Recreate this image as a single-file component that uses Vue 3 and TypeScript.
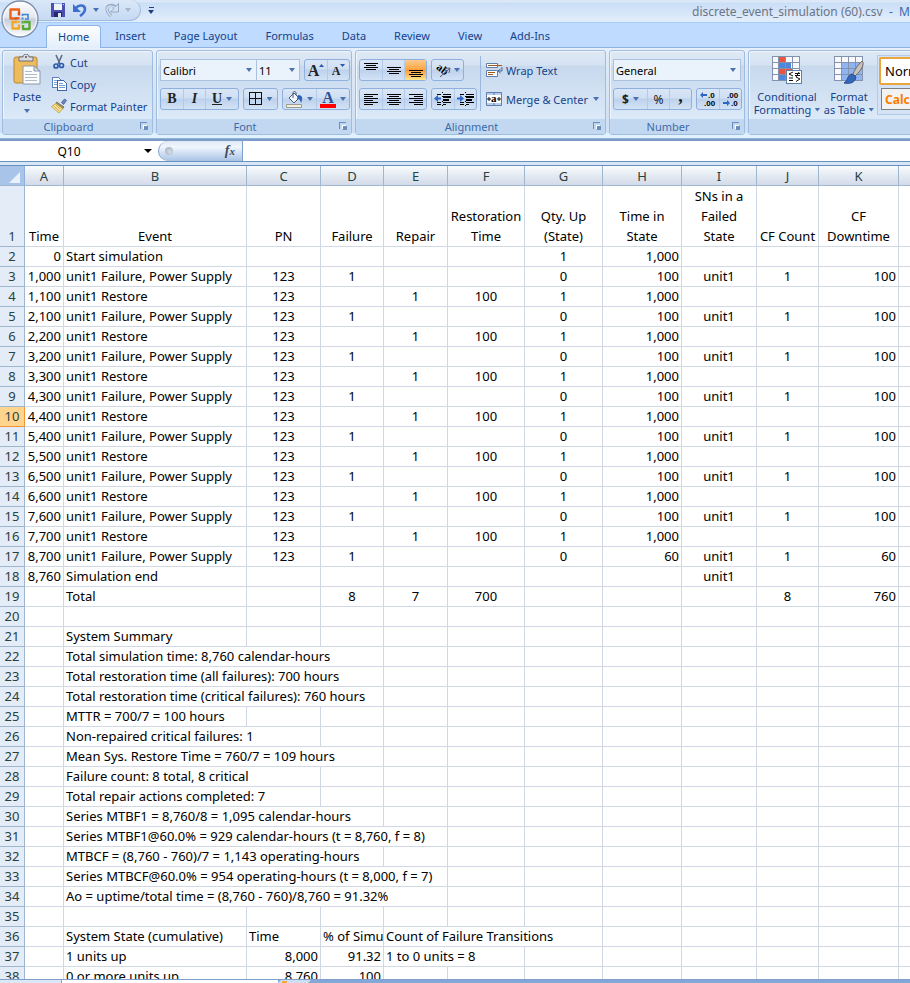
<script setup lang="ts">
import { ref } from 'vue'

type Align = 'l' | 'c' | 'r'
interface Cell {
  text: string
  align: Align
  span: number
}
interface Row {
  n: number
  cells: Cell[]
}

const tabs: string[] = ['Home', 'Insert', 'Page Layout', 'Formulas', 'Data', 'Review', 'View', 'Add-Ins']
const activeTab = ref('Home')
const fontName = ref('Calibri')
const fontSize = ref('11')
const numberFormat = ref('General')
const nameBox = ref('Q10')
const formula = ref('')
const selectedRow = 10

const columns: string[] = ['A', 'B', 'C', 'D', 'E', 'F', 'G', 'H', 'I', 'J', 'K', 'L']
const defaultAlign: Align[] = ['r', 'l', 'c', 'c', 'c', 'c', 'c', 'r', 'c', 'c', 'r', 'l']

const headings: string[] = [
  'Time', 'Event', 'PN', 'Failure', 'Repair', 'Restoration\nTime', 'Qty. Up\n(State)',
  'Time in\nState', 'SNs in a\nFailed\nState', 'CF Count', 'CF\nDowntime', '',
]

function plain(values: string[]): Cell[] {
  return columns.map((_, i) => ({ text: values[i] ?? '', align: defaultAlign[i], span: 1 }))
}

// A long text in column B runs over the empty cells on its right.
function note(text: string, span: number): Cell[] {
  const cells: Cell[] = [
    { text: '', align: 'r', span: 1 },
    { text, align: 'l', span },
  ]
  for (let i = 1 + span; i < columns.length; i++) cells.push({ text: '', align: 'l', span: 1 })
  return cells
}

const eventTimes: string[] = [
  '1,000', '1,100', '2,100', '2,200', '3,200', '3,300', '4,300', '4,400',
  '5,400', '5,500', '6,500', '6,600', '7,600', '7,700', '8,700',
]

const events: Cell[][] = eventTimes.map((time, i) => {
  if (i % 2 === 1) return plain([time, 'unit1 Restore', '123', '', '1', '100', '1', '1,000'])
  const down = i === eventTimes.length - 1 ? '60' : '100'
  return plain([time, 'unit1 Failure, Power Supply', '123', '1', '', '', '0', down, 'unit1', '1', down])
})

const notes: [string, number][] = [
  ['System Summary', 1],
  ['Total simulation time: 8,760 calendar-hours', 3],
  ['Total restoration time (all failures): 700 hours', 3],
  ['Total restoration time (critical failures): 760 hours', 3],
  ['MTTR = 700/7 = 100 hours', 1],
  ['Non-repaired critical failures: 1', 2],
  ['Mean Sys. Restore Time = 760/7 = 109 hours', 3],
  ['Failure count: 8 total, 8 critical', 2],
  ['Total repair actions completed: 7', 2],
  ['Series MTBF1 = 8,760/8 = 1,095 calendar-hours', 3],
  ['Series MTBF1@60.0% = 929 calendar-hours (t = 8,760, f = 8)', 4],
  ['MTBCF = (8,760 - 760)/7 = 1,143 operating-hours', 3],
  ['Series MTBCF@60.0% = 954 operating-hours (t = 8,000, f = 7)', 4],
  ['Ao = uptime/total time = (8,760 - 760)/8,760 = 91.32%', 4],
]

function stateRow(values: [string, Align, number][]): Cell[] {
  const cells: Cell[] = [{ text: '', align: 'r', span: 1 }]
  let used = 1
  for (const [text, align, span] of values) {
    cells.push({ text, align, span })
    used += span
  }
  for (; used < columns.length; used++) cells.push({ text: '', align: 'l', span: 1 })
  return cells
}

const body: Cell[][] = [
  plain(['0', 'Start simulation', '', '', '', '', '1', '1,000']),
  ...events,
  plain(['8,760', 'Simulation end', '', '', '', '', '', '', 'unit1']),
  plain(['', 'Total', '', '8', '7', '700', '', '', '', '8', '760']),
  plain([]),
  ...notes.map(([text, span]) => note(text, span)),
  plain([]),
  stateRow([['System State (cumulative)', 'l', 1], ['Time', 'l', 1], ['% of Simu', 'l', 1], ['Count of Failure Transitions', 'l', 3]]),
  stateRow([['1 units up', 'l', 1], ['8,000', 'r', 1], ['91.32', 'r', 1], ['1 to 0 units = 8', 'l', 2]]),
  stateRow([['0 or more units up', 'l', 1], ['8,760', 'r', 1], ['100', 'r', 1]]),
]
const rows: Row[] = body.map((cells, i) => ({ n: i + 2, cells }))

// Line ends of the six paragraph-alignment pictures: [x1, x2, y].
const alignTop: number[][] = [[2, 16, 1], [4, 14, 3], [2, 16, 5], [4, 14, 7]]
const alignMid: number[][] = [[2, 16, 5], [4, 14, 7], [2, 16, 9], [4, 14, 11]]
const alignBot: number[][] = [[2, 16, 8], [4, 14, 10], [2, 16, 12], [4, 14, 14]]
const alignLeft: number[][] = [[2, 16, 3], [2, 11, 5], [2, 16, 7], [2, 11, 9], [2, 16, 11], [2, 11, 13]]
const alignCenter: number[][] = [[2, 16, 3], [4, 14, 5], [2, 16, 7], [4, 14, 9], [2, 16, 11], [4, 14, 13]]
const alignRight: number[][] = [[2, 16, 3], [7, 16, 5], [2, 16, 7], [7, 16, 9], [2, 16, 11], [7, 16, 13]]
const topRowAligns = [
  { name: 'Top Align', lines: alignTop, on: false },
  { name: 'Middle Align', lines: alignMid, on: false },
  { name: 'Bottom Align', lines: alignBot, on: true },
]
const lowRowAligns = [
  { name: 'Align Left', lines: alignLeft },
  { name: 'Center', lines: alignCenter },
  { name: 'Align Right', lines: alignRight },
]
</script>

<template>
  <div class="app">
    <header class="titlebar">
      <div class="quick">
        <button class="q" aria-label="Save">
          <svg width="14" height="14" viewBox="0 0 14 14" shape-rendering="crispEdges">
            <path d="M0 0h13l1 1v13H0z" fill="#4a4fb0" />
            <path d="M3 0h8v7H3z" fill="#eef3fc" />
            <path d="M3 0h8v1H3z" fill="#8fb0e8" />
            <path d="M3 9h8v5H3z" fill="#26286e" />
            <path d="M7 10h3v4H7z" fill="#e3e7f5" />
            <path d="M12 1h1v1h-1z" fill="#c5cdf0" />
          </svg>
        </button>
        <button class="q" aria-label="Undo">
          <svg width="14" height="14" viewBox="0 0 14 14">
            <path d="M3 5C6 1 12 2 12 6c0 3-2 5-5 7" fill="none" stroke="#3c6fd0" stroke-width="2.600" />
            <path d="M0 1v8h8z" fill="#3c6fd0" />
          </svg>
        </button>
        <i class="caret"></i>
        <button class="q redo" aria-label="Redo">
          <svg width="14" height="14" viewBox="0 0 14 14">
            <path d="M11 5C8 1 2 2 2 6c0 3 2 5 4 7" fill="none" stroke="#93a8c6" stroke-width="3.200" />
            <path d="M13.500 .5v8.500H5.500z" fill="#d5e1f1" stroke="#93a8c6" />
            <path d="M11 5.500C8 1.500 2 2.500 2 6c0 3 2 5 4 7" fill="none" stroke="#d5e1f1" stroke-width="1.400" />
          </svg>
        </button>
        <i class="caret dim"></i>
      </div>
      <button class="customize" aria-label="Customize Quick Access Toolbar"><i class="bar"></i><i class="caret navy"></i></button>
      <h1 class="title">discrete_event_simulation (60).csv<span> &nbsp;- &nbsp;Microsoft Excel</span></h1>
    </header>

    <nav class="tabs">
      <button v-for="t in tabs" :key="t" :class="['tab', { on: t === activeTab }]" @click="activeTab = t">{{ t }}</button>
    </nav>

    <button class="office" aria-label="Office Button">
      <svg width="40" height="40" viewBox="0 0 40 40">
        <defs>
          <linearGradient id="orb" x1="0" y1="0" x2="0" y2="1">
            <stop offset="0" stop-color="#ffffff" />
            <stop offset=".45" stop-color="#e3e7ef" />
            <stop offset=".52" stop-color="#c6cedb" />
            <stop offset="1" stop-color="#ffffff" />
          </linearGradient>
        </defs>
        <circle cx="20" cy="19" r="18" fill="url(#orb)" stroke="#7f90ac" stroke-width="1.300" />
        <circle cx="20" cy="19" r="16.500" fill="none" stroke="#ffffff" stroke-opacity=".8" stroke-width="1" />
        <g fill="none" stroke-width="2.400" stroke-linejoin="round">
          <path d="M15 18.500h-4.500V9.500h8.500v4" stroke="#e8641b" />
          <path d="M19 12.500v3M15 18.500h2" stroke="#d8481c" />
          <path d="M17 22h-4.500v6.500h6.500V24.500" stroke="#f3a823" />
          <path d="M23.500 22h6v7h-6.500v-4" stroke="#5aa83a" />
        </g>
        <g fill="none" stroke="#3f86d8" stroke-width="1.600">
          <path d="M22.500 16v-1.500h5.500v4.500h-3" />
        </g>
        <path d="M17 17h2.500v2.500H17z" fill="#e8641b" />
        <path d="M21.500 17.500h2v2h-2z" fill="#3f86d8" />
        <path d="M17.500 21h2v2h-2z" fill="#f3a823" />
        <path d="M21.500 21h2v2.500h-2z" fill="#5aa83a" />
      </svg>
    </button>

    <section class="ribbon">
      <fieldset class="group clip">
        <div class="body">
          <button class="big paste">
            <svg width="28" height="32" viewBox="0 0 28 32">
              <rect x="1" y="3" width="23" height="26" rx="2" fill="#eebc5c" stroke="#b98733" />
              <path d="M6 3h4c0-4 6-4 6 0h4v4H6z" fill="#d9dbe0" stroke="#6e6f78" />
              <circle cx="13" cy="3" r="1" fill="#55565e" />
              <path d="M10 12h11l6 5v13H10z" fill="#fbfcfe" stroke="#8b98ac" />
              <path d="M21 12v5h6z" fill="#d5deeb" stroke="#8b98ac" />
              <path d="M12 17.500h7M12 20.500h12M12 23.500h12M12 26.500h12" stroke="#b0bac9" />
            </svg>
            <span>Paste</span>
            <i class="caret"></i>
          </button>
          <div class="stack">
            <button class="line">
              <svg width="16" height="16" viewBox="0 0 16 16">
                <path d="M5 1l4 9M11 1L7 10" stroke="#5c6c88" stroke-width="1.600" />
                <circle cx="5" cy="12" r="2" fill="none" stroke="#2d5cae" stroke-width="1.700" />
                <circle cx="10.500" cy="11.500" r="2" fill="none" stroke="#2d5cae" stroke-width="1.700" />
              </svg>Cut
            </button>
            <button class="line">
              <svg width="16" height="16" viewBox="0 0 16 16" shape-rendering="crispEdges">
                <path d="M1.500 1.500h6l2 2v8h-8z" fill="#fff" stroke="#5a80bd" />
                <path d="M3 4h4v1H3zM3 6h4v1H3zM3 8h4v1H3z" fill="#7ea2d8" />
                <path d="M6.500 4.500h6l3 3v7h-9z" fill="#fff" stroke="#3f66a8" />
                <path d="M8 7h4v1H8zM8 9h6v1H8zM8 11h6v1H8z" fill="#6f98d6" />
              </svg>Copy
            </button>
            <button class="line">
              <svg width="16" height="16" viewBox="0 0 16 16">
                <path d="M10.500 4.500l3-3.500 2 1.500-3 4z" fill="#6d87bd" stroke="#45598c" stroke-width=".8" />
                <path d="M5.500 4L13 9l-1.500 2L5 6z" fill="#9d8a68" stroke="#6c5d45" stroke-width=".7" />
                <path d="M5 5.500L11.500 10.500 8 15 0.500 8.500z" fill="#f7e08d" stroke="#bf9a3c" stroke-width=".8" />
                <path d="M3 8l5 5M5 7l4 4" stroke="#cda84b" stroke-width=".8" />
              </svg>Format Painter
            </button>
          </div>
        </div>
        <div class="caption"><span>Clipboard</span><i class="launch"></i></div>
      </fieldset>

      <fieldset class="group font">
        <div class="body col">
          <div class="tools">
            <div class="combos">
              <label class="combo wide"><select v-model="fontName" aria-label="Font"><option>Calibri</option><option>Arial</option></select><i class="caret"></i></label>
              <label class="combo narrow"><select v-model="fontSize" aria-label="Font Size"><option>11</option><option>12</option></select><i class="caret"></i></label>
            </div>
            <div class="set">
              <button class="b w22 grow" aria-label="Increase Font Size">A<svg width="5" height="3" viewBox="0 0 5 3"><path d="M0 3h5L2.500 0z" fill="#2c57a4" /></svg></button>
              <button class="b w22 grow small" aria-label="Decrease Font Size">A<svg width="5" height="3" viewBox="0 0 5 3"><path d="M0 0h5L2.500 3z" fill="#2c57a4" /></svg></button>
            </div>
          </div>
          <div class="tools">
            <div class="set">
              <button class="b w22 letter" aria-label="Bold">B</button>
              <button class="b w22 letter italic" aria-label="Italic">I</button>
              <button class="b w33 letter under" aria-label="Underline"><u>U</u><i class="caret"></i></button>
            </div>
            <div class="set">
              <button class="b w33" aria-label="Borders">
                <svg width="14" height="14" viewBox="0 0 14 14" shape-rendering="crispEdges"><path d="M0 0h13v1H0zM0 12h13v1H0zM0 0h1v13H0zM12 0h1v13h-1zM6 0h1v13H6zM0 6h13v1H0z" fill="#111" /></svg><i class="caret"></i>
              </button>
            </div>
            <div class="set">
              <button class="b w33" aria-label="Fill Color">
                <svg width="17" height="17" viewBox="0 0 17 17">
                  <path d="M3 7l5-5 5 5-5 5z" fill="#f2f5fa" stroke="#4c5b77" />
                  <path d="M7 7V2c0-2 3-2 3 0v2" fill="none" stroke="#4c5b77" />
                  <path d="M12 4c5 0 5 4 3 8-1-3-1-4-4-4z" fill="#2e62b5" />
                  <path d="M.5 13.500h15v3H.5z" fill="#eef0e4" stroke="#9b9b8d" />
                </svg><i class="caret"></i>
              </button>
              <button class="b w33 ink" aria-label="Font Color"><span>A</span><i class="caret"></i></button>
            </div>
          </div>
        </div>
        <div class="caption"><span>Font</span><i class="launch"></i></div>
      </fieldset>

      <fieldset class="group align">
        <div class="body">
          <div class="col">
            <div class="tools">
              <div class="set">
                <button v-for="a in topRowAligns" :key="a.name" :class="['b', 'w22', { lit: a.on }]" :aria-label="a.name">
                  <svg width="18" height="16" viewBox="0 0 18 16" shape-rendering="crispEdges"><rect v-for="(l, i) in a.lines" :key="i" :x="l[0]" :y="l[2]" :width="l[1] - l[0]" height="1" /></svg>
                </button>
              </div>
              <div class="set">
                <button class="b w32" aria-label="Orientation">
                  <svg width="17" height="17" viewBox="0 0 17 17">
                    <text x="1" y="10" transform="rotate(38 6 8)" class="ab">ab</text>
                    <path d="M5 15l9-8M10 6.500l5-.5-1 5" fill="none" stroke="#5c5c66" />
                  </svg><i class="caret"></i>
                </button>
              </div>
            </div>
            <div class="tools">
              <div class="set">
                <button v-for="a in lowRowAligns" :key="a.name" class="b w22" :aria-label="a.name">
                  <svg width="18" height="16" viewBox="0 0 18 16" shape-rendering="crispEdges"><rect v-for="(l, i) in a.lines" :key="i" :x="l[0]" :y="l[2]" :width="l[1] - l[0]" height="1" /></svg>
                </button>
              </div>
              <div class="set">
                <button class="b w22" aria-label="Decrease Indent">
                  <svg width="18" height="16" viewBox="0 0 18 16" shape-rendering="crispEdges">
                    <path d="M3 3h4v1H3zM9 3h8v1H9zM9 5h8v2H9zM9 8h6v2H9zM3 11h4v1H3zM9 11h8v1H9zM3 13h4v1H3zM9 13h3v1H9zM8 1h1v1H8zM8 5h1v1H8zM8 10h1v1H8zM8 14h1v1H8z" />
                    <path d="M0 7.500L4 4v2.500h3v2H4V11z" fill="#2f66c4" shape-rendering="auto" />
                  </svg>
                </button>
                <button class="b w22" aria-label="Increase Indent">
                  <svg width="18" height="16" viewBox="0 0 18 16" shape-rendering="crispEdges">
                    <path d="M3 3h4v1H3zM9 3h8v1H9zM9 5h8v2H9zM9 8h6v2H9zM3 11h4v1H3zM9 11h8v1H9zM3 13h4v1H3zM9 13h3v1H9zM8 1h1v1H8zM8 5h1v1H8zM8 10h1v1H8zM8 14h1v1H8z" />
                    <path d="M7 7.500L3 4v2.500H0v2h3V11z" fill="#2f66c4" shape-rendering="auto" />
                  </svg>
                </button>
              </div>
            </div>
          </div>
          <i class="divider"></i>
          <div class="col">
            <button class="line">
              <svg width="17" height="16" viewBox="0 0 17 16">
                <path d="M.5 1.500h11v4H.5zM.5 8.500h11v6H.5z" fill="#fff" stroke="#5f7fae" />
                <path d="M2 3h14v1H2z" fill="#a05a1c" /><path d="M2 10h7v1H2zM2 12h5v1H2z" fill="#a05a1c" />
                <path d="M16 5v4h-3m1.500-2L12 9l2.500 2" fill="none" stroke="#44669c" />
              </svg>Wrap Text
            </button>
            <button class="line">
              <svg width="17" height="16" viewBox="0 0 17 16">
                <path d="M.5 1.500h15v13H.5z" fill="#b9cdea" stroke="#5f7fae" />
                <path d="M8 1v3M8 12v3" stroke="#5f7fae" />
                <path d="M1 4h14v8H1z" fill="#fff" />
                <path d="M1 8h4M11 8h4M3 6v4M13 6v4" stroke="#111" />
                <text x="5" y="11" class="mergea">a</text>
              </svg>Merge &amp; Center<i class="caret"></i>
            </button>
          </div>
        </div>
        <div class="caption"><span>Alignment</span><i class="launch"></i></div>
      </fieldset>

      <fieldset class="group number">
        <div class="body col">
          <label class="combo full"><select v-model="numberFormat" aria-label="Number Format"><option>General</option><option>Number</option></select><i class="caret"></i></label>
          <div class="tools">
            <div class="set">
              <button class="b w33 sym" aria-label="Accounting Number Format"><b>$</b><i class="caret"></i></button>
              <button class="b w22 sym" aria-label="Percent Style">%</button>
              <button class="b w22 comma" aria-label="Comma Style">,</button>
            </div>
            <div class="set">
              <button class="b w22" aria-label="Increase Decimal">
                <svg width="18" height="16" viewBox="0 0 18 16"><path d="M1 4l3-3v2h4v2H4v2z" fill="#2f66c4" /><text x="9" y="7" class="dec">.0</text><text x="5" y="15" class="dec">.00</text></svg>
              </button>
              <button class="b w22" aria-label="Decrease Decimal">
                <svg width="18" height="16" viewBox="0 0 18 16"><text x="5" y="7" class="dec">.00</text><path d="M8 12L5 9v2H1v2h4v2z" fill="#2f66c4" /><text x="9" y="15" class="dec">.0</text></svg>
              </button>
            </div>
          </div>
        </div>
        <div class="caption"><span>Number</span><i class="launch"></i></div>
      </fieldset>

      <fieldset class="group styles">
        <div class="body">
          <button class="big cond">
            <svg width="30" height="30" viewBox="0 0 30 30" shape-rendering="crispEdges">
              <path d="M0 1h28v24H0z" fill="#f7f9fd" />
              <path d="M7 1h6v6H7z" fill="#e8543f" /><path d="M7 7h12v6H7z" fill="#4f86dc" /><path d="M7 13h14v6H7z" fill="#e8543f" /><path d="M7 19h6v6H7z" fill="#4f86dc" />
              <path d="M.5 1v24M6.500 1v24M13.500 1v24M20.500 1v24M27.500 1v24M0 1.500h28M0 7.500h28M0 13.500h28M0 19.500h28M0 25.500h28" stroke="#8492ad" fill="none" />
              <path d="M14.500 15.500h15v13h-15z" fill="#fff" stroke="#5f7ea8" />
              <path d="M21 17l-4 2 4 2M17 23h4M17 25.500h4M23 18.500h5M23 20.500h5M27 17l-3 5M24 22l4 2-4 2.500" fill="none" stroke="#111" shape-rendering="auto" />
            </svg>
            <span>Conditional</span>
            <span class="drop">Formatting<i class="caret"></i></span>
          </button>
          <button class="big ftable">
            <svg width="30" height="30" viewBox="0 0 30 30">
              <path d="M0 1h28v24H0z" fill="#f7f9fd" />
              <path d="M7 7h21v18H7z" fill="#8fb4f2" />
              <path d="M.5 1v24M7.500 1v24M14.500 1v24M21.500 1v24M28.500 1v24M0 1.500h29M0 7.500h29M0 13.500h29M0 19.500h29M0 25.500h29" stroke="#8492ad" fill="none" shape-rendering="crispEdges" />
              <path d="M28 6c3 2 0 9-7 15l-2-2C22 12 26 8 28 6z" fill="#c9c3bb" stroke="#6a6560" />
              <path d="M18 19l4 3c-1 6-6 7-12 6 4-2 3-8 8-9z" fill="#3568b8" stroke="#274f92" />
            </svg>
            <span>Format</span>
            <span class="drop">as Table<i class="caret"></i></span>
          </button>
          <div class="gallery">
            <button class="swatch normal">Normal</button>
            <button class="swatch calc">Calculation</button>
          </div>
        </div>
        <div class="caption"></div>
      </fieldset>
    </section>

    <div class="formulabar">
      <label class="namebox"><input v-model="nameBox" aria-label="Name Box" /><i class="caret black"></i></label>
      <div class="fx"><i class="dot"></i><button class="fxbtn" aria-label="Insert Function">f<small>x</small></button></div>
      <input v-model="formula" class="formula" aria-label="Formula Bar" />
    </div>

    <main class="sheet">
      <table>
        <colgroup><col class="k0" /><col v-for="c in columns" :key="c" :class="'k' + c" /></colgroup>
        <thead>
          <tr><th class="corner" aria-label="Select All"><i></i></th><th v-for="c in columns" :key="c" scope="col">{{ c }}</th></tr>
        </thead>
        <tbody>
          <tr class="head"><th scope="row">1</th><td v-for="(h, i) in headings" :key="i" class="c">{{ h }}</td></tr>
          <tr v-for="r in rows" :key="r.n">
            <th scope="row" :class="{ sel: r.n === selectedRow }">{{ r.n }}</th>
            <td v-for="(c, i) in r.cells" :key="i" :class="c.align" :colspan="c.span">{{ c.text }}</td>
          </tr>
        </tbody>
      </table>
    </main>

    <footer class="sheettabs">
      <div class="navs"></div>
      <button class="sheettab">discrete_event_simulation (60)</button>
      <button class="newtab" aria-label="Insert Worksheet"><i></i></button>
    </footer>
  </div>
</template>

<style>
html,
body {
  margin: 0;
  background: #bfdbff;
}
</style>

<style scoped>
.app {
  position: relative;
  display: flex;
  flex-direction: column;
  height: 100vh;
  overflow: hidden;
  font-family: 'Noto Sans', 'Open Sans', sans-serif;
  font-size: 11px;
  color: #15428b;
}
.app *,
.app *::before {
  box-sizing: border-box;
}
button {
  margin: 0;
  padding: 0;
  border: 0;
  background: none;
  font: inherit;
  color: inherit;
  cursor: default;
}
svg {
  display: block;
  flex: none;
}
.caret {
  flex: none;
  width: 6px;
  height: 4px;
  background: #4a72b0;
  clip-path: polygon(0 0, 100% 0, 50% 100%);
}
.caret.dim {
  background: #a9b5c6;
}
.caret.navy {
  background: #1f3f78;
}
.caret.black {
  width: 8px;
  height: 4px;
  background: #000;
}

/* title bar */
.titlebar {
  flex: none;
  display: flex;
  height: 23px;
  padding-left: 34px;
  background: linear-gradient(#dce8f7 0, #dce8f7 2px, #cadef7 3px, #e2eefc 22px);
  border-bottom: 1px solid #a5ccfa;
}
.quick {
  display: flex;
  align-items: center;
  gap: 6px;
  width: 107px;
  height: 21px;
  padding-left: 17px;
  background: linear-gradient(#dbe8f8, #c6daf4);
  border: 1px solid #a3bbdb;
  border-top: 0;
  border-left: 0;
  border-radius: 0 10px 11px 0;
}
.q + .q {
  margin-left: 2px;
}
.customize {
  display: flex;
  flex-direction: column;
  align-items: center;
  gap: 2px;
  width: 20px;
  padding-top: 7px;
}
.customize .bar {
  width: 5px;
  height: 1px;
  background: #1f3f78;
}
.title {
  flex: 1;
  margin: 0;
  padding-left: 531px;
  font-size: 12px;
  font-weight: 400;
  line-height: 23px;
  color: #6b7585;
  white-space: nowrap;
  overflow: hidden;
}
.title span {
  color: #3e6aaa;
}

.office {
  position: absolute;
  top: 0;
  left: 0;
}

/* tabs */
.tabs {
  flex: none;
  display: flex;
  align-items: flex-end;
  height: 25px;
  padding-left: 46px;
  background: #bfdbff;
  border-bottom: 1px solid #8db2e3;
}
.tab {
  height: 23px;
  padding: 1px 14px 0;
  line-height: 22px;
  white-space: nowrap;
}
.tab.on {
  margin-bottom: -1px;
  padding: 0 11px;
  line-height: 20px;
  background: linear-gradient(#fdfeff, #e3eefb);
  border: 1px solid #8db2e3;
  border-bottom: 0;
  border-radius: 4px 4px 0 0;
}

/* ribbon */
.ribbon {
  flex: none;
  display: flex;
  gap: 3px;
  padding: 2px 0 3px 2px;
  background: linear-gradient(#e7effa, #dce8f6 20px, #cfdff3 84px, #e0f2ff 86px);
  border-bottom: 1px solid #8fb0d8;
  overflow: hidden;
}
.group {
  flex: none;
  display: flex;
  flex-direction: column;
  min-width: 0;
  height: 85px;
  margin: 0;
  padding: 0;
  border: 1px solid #9fbddf;
  border-radius: 3px;
  background: linear-gradient(#dfe9f5 0, #d5e2f2 14px, #c8d9ee 15px, #dbe9f8 68px);
  box-shadow: inset 1px 1px 0 #eef5fd;
}
.clip {
  width: 151px;
}
.font {
  width: 196px;
}
.align {
  width: 251px;
}
.number {
  width: 136px;
}
.styles {
  flex: 1 0 165px;
}
.body {
  display: flex;
  flex: 1;
  padding: 8px 0 0 3px;
}
.col {
  display: flex;
  flex-direction: column;
  gap: 7px;
}
.caption {
  position: relative;
  display: flex;
  align-items: center;
  justify-content: center;
  height: 15px;
  padding: 0 18px 0 0;
  line-height: 14px;
  color: #3e6aaa;
  background: #c1d8f0;
}
.launch {
  position: absolute;
  right: 5px;
  top: 3px;
  width: 7px;
  height: 7px;
  border-top: 1px solid #6b8fbd;
  border-left: 1px solid #6b8fbd;
}
.launch::before {
  content: '';
  position: absolute;
  left: 2px;
  top: 2px;
  width: 5px;
  height: 5px;
  background: #6b8fbd;
  border: 1px solid #ffffff;
  border-right-color: #6b8fbd;
  border-bottom-color: #6b8fbd;
}
.big {
  flex: none;
  display: flex;
  flex-direction: column;
  align-items: center;
  line-height: 13px;
  white-space: nowrap;
}
.clip .body {
  padding: 0 0 0 4px;
}
.paste {
  width: 40px;
  padding-top: 3px;
}
.paste svg + span {
  margin: 4px 0 6px;
}
.stack {
  display: flex;
  flex-direction: column;
  padding-left: 4px;
}
.line {
  display: flex;
  align-items: center;
  gap: 3px;
  height: 22px;
  white-space: nowrap;
}
.line .caret {
  margin-left: 2px;
}
.tools {
  display: flex;
  gap: 4px;
}
.combos {
  display: flex;
}
.combo {
  display: flex;
  align-items: center;
  height: 22px;
  padding-right: 4px;
  background: #eaf2fb;
  border: 1px solid #abc1de;
}
.combo + .combo {
  border-left: 0;
}
.combo select {
  flex: 1;
  min-width: 0;
  height: 20px;
  padding: 0 0 0 2px;
  border: 0;
  background: transparent;
  font: inherit;
  color: #000;
  appearance: none;
  outline: 0;
}
.wide {
  width: 97px;
}
.narrow {
  width: 43px;
}
.full {
  width: 128px;
}
.set {
  display: flex;
  height: 22px;
  border: 1px solid #8fb0dc;
  border-radius: 3px;
  background: linear-gradient(#d9e6f6 0, #cfdff3 9px, #bdd1ec 10px, #d3e3f6 20px);
}
.b {
  display: flex;
  align-items: center;
  justify-content: center;
  gap: 4px;
  color: #222;
}
.b + .b {
  border-left: 1px solid #b3cae8;
}
.w22 {
  width: 22px;
}
.w32 {
  width: 31px;
  gap: 2px;
}
.w33 {
  width: 33px;
}
.lit {
  background: linear-gradient(#fbcb8b 0, #fda648 9px, #fc9a38 10px, #ffe38c 20px);
}
.letter {
  font: bold 14px 'Liberation Serif', serif;
}
.italic {
  font-style: italic;
}
.grow {
  align-items: flex-start;
  gap: 0;
  font: bold 16px/21px 'Liberation Serif', serif;
}
.grow svg {
  margin-top: 4px;
}
.grow.small {
  font-size: 12px;
  line-height: 23px;
}
.ink span {
  width: 16px;
  height: 18px;
  border-bottom: 4px solid #f00;
  font: bold 16px/15px 'Liberation Serif', serif;
  color: #2c4f94;
  text-align: center;
}
.sym {
  font-size: 12px;
}
.comma {
  font: bold 18px/8px 'Liberation Serif', serif;
  padding-bottom: 7px;
}
.ab {
  font: bold 11px 'Liberation Serif', serif;
}
.mergea {
  font: bold 11px 'Liberation Serif', serif;
}
.dec {
  font: bold 8px 'Liberation Sans', sans-serif;
}
.divider {
  width: 1px;
  height: 55px;
  margin: -3px 5px 0 3px;
  background: #9ab8de;
}
.styles .body {
  padding-top: 4px;
  overflow: hidden;
}
.cond {
  width: 70px;
}
.ftable {
  width: 54px;
}
.cond svg + span,
.ftable svg + span {
  margin-top: 5px;
}
.drop {
  display: flex;
  align-items: center;
  gap: 3px;
}
.gallery {
  flex: 1;
  display: flex;
  flex-direction: column;
  gap: 3px;
  height: 60px;
  margin-left: 1px;
  padding: 1px 0 0 1px;
  background: #d3e2f5;
  border: 1px solid #b3cae8;
}
.swatch {
  text-align: left;
  white-space: nowrap;
  background: #fff;
  font-size: 13px;
}
.normal {
  width: 80px;
  height: 28px;
  padding-left: 4px;
  border: 2px solid #eaa63c;
  border-radius: 2px;
  color: #000;
}
.calc {
  width: 76px;
  height: 22px;
  margin-left: 2px;
  padding-left: 3px;
  background: #f2f2f2;
  border: 1px solid #7f7f7f;
  font-weight: 700;
  font-size: 12px;
  color: #fa7d00;
  overflow: hidden;
}

/* formula bar */
.formulabar {
  flex: none;
  display: flex;
  height: 23px;
  border-top: 2px solid #7a9cc6;
  border-bottom: 1px solid #6a92bd;
  background: #fff;
}
.namebox {
  display: flex;
  align-items: center;
  width: 158px;
  padding-right: 6px;
}
.namebox input {
  flex: 1;
  min-width: 0;
  padding: 0 6px 0 0;
  border: 0;
  outline: 0;
  background: transparent;
  font: inherit;
  font-size: 12px;
  color: #000;
  text-align: center;
}
.fx {
  display: flex;
  align-items: center;
  justify-content: space-between;
  width: 85px;
  padding: 0 7px 0 6px;
  border: 1px solid #7fa0cb;
  border-top: 0;
  border-bottom: 0;
  border-radius: 10px 0 0 10px;
  background: linear-gradient(#dfe9f6, #f0f6fd 30%, #a9c3e5);
}
.dot {
  width: 8px;
  height: 8px;
  border-radius: 50%;
  background: radial-gradient(circle at 60% 60%, #d9dee6, #9aa7bb);
}
.fxbtn {
  font: italic bold 14px 'Liberation Serif', serif;
  color: #444c5a;
}
.fxbtn small {
  font-size: 11px;
}
.formula {
  flex: 1;
  min-width: 0;
  padding: 0 4px;
  border: 0;
  outline: 0;
  background: transparent;
  font: inherit;
}

/* grid */
.sheet {
  flex: 1;
  min-height: 0;
  overflow: hidden;
  background: #fff;
  border-top: 3px solid #d7e6f7;
}
table {
  width: max(100%, 962px);
  table-layout: fixed;
  border-spacing: 0;
  border-top: 1px solid #6a8fbb;
  font-size: 13px;
  line-height: 19px;
  color: #000;
}
.k0 {
  width: 25px;
}
.kA {
  width: 39px;
}
.kB {
  width: 183px;
}
.kC {
  width: 74px;
}
.kD {
  width: 63px;
}
.kE {
  width: 64px;
}
.kF {
  width: 77px;
}
.kG {
  width: 78px;
}
.kH {
  width: 79px;
}
.kI {
  width: 75px;
}
.kJ {
  width: 62px;
}
.kK {
  width: 80px;
}
th,
td {
  height: 20px;
  padding: 0 2px;
  font-weight: 400;
  white-space: pre;
  overflow: hidden;
}
td {
  border-right: 1px solid #d0d7e5;
  border-bottom: 1px solid #d0d7e5;
}
th {
  padding: 0;
  text-align: center;
  color: #27413e;
  background: #e4ecf7;
  border-right: 1px solid #9eb6ce;
  border-bottom: 1px solid #9eb6ce;
}
thead th {
  padding-top: 2px;
  line-height: 17px;
  background: linear-gradient(#f9fcfd, #e4eaf2 50%, #d3dbe9);
}
thead .corner {
  background: #a9c4e9;
  border-right-color: #8fb0dc;
}
.corner i {
  display: block;
  width: 11px;
  height: 11px;
  margin: 2px 0 0 9px;
  background: #e9f1fb;
  clip-path: polygon(100% 0, 100% 100%, 0 100%);
}
.head th,
.head td {
  height: 60px;
  line-height: 20px;
  vertical-align: bottom;
}
.sel {
  background: #ffd58d;
  border-color: #f29536;
}
.l {
  text-align: left;
}
.c {
  text-align: center;
}
.r {
  text-align: right;
}

/* sheet tabs */
.sheettabs {
  flex: none;
  display: flex;
  height: 4px;
  overflow: hidden;
  background: #84a7d9;
  border-top: 1px solid #7f9fcb;
}
.navs {
  width: 62px;
  background: #dce8f7;
  border-right: 1px solid #8aa5cc;
}
.sheettab {
  display: flex;
  width: 216px;
  height: 20px;
  padding-left: 12px;
  background: #fff;
  font-weight: 700;
  font-size: 11px;
  line-height: 15px;
  white-space: nowrap;
  overflow: hidden;
}
.newtab {
  width: 33px;
  background: #cfdff3;
  clip-path: polygon(3px 0, 100% 0, 30px 100%, 0 100%);
}
.newtab i {
  display: block;
  width: 5px;
  height: 3px;
  margin: 1px 0 0 4px;
  background: #f0a83c;
}
</style>
